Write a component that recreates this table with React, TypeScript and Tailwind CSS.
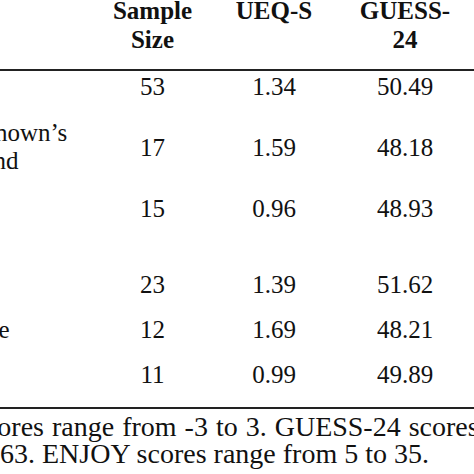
const rows = [
  { label: ["Total"], n: "53", ueq: "1.34", guess: "50.49", mt: "mt-[1px]" },
  { label: ["PlayerUnknown’s", "Battleground"], n: "17", ueq: "1.59", guess: "48.18", mt: "mt-[18px]" },
  { label: ["Tetris"], n: "15", ueq: "0.96", guess: "48.93", mt: "mt-[19px]" },
  { label: ["Casual"], n: "23", ueq: "1.39", guess: "51.62", mt: "mt-[47px]" },
  { label: ["Mini Puzzle"], n: "12", ueq: "1.69", guess: "48.21", mt: "mt-[16px]" },
  { label: ["Chess"], n: "11", ueq: "0.99", guess: "49.89", mt: "mt-[16px]" },
];

export default function App() {
  return (
    <div className="h-[474px] w-[474px] overflow-hidden bg-white text-[#111] [font-family:'Liberation_Serif',serif]">
      <div className="ml-[-112px] mt-[-4px] w-[620px] text-[25px] leading-[29px]">
        {/* Header */}
        <div className="grid grid-cols-[202px_125px_118px_144px] pb-[15px] text-center font-bold">
          <div />
          <div>
            Sample
            <br />
            Size
          </div>
          <div>UEQ-S</div>
          <div>
            GUESS-
            <br />
            24
          </div>
        </div>
        <div className="h-[2px] w-full bg-[#222]" />

        {/* Body */}
        {rows.map((r) => (
          <div
            key={r.n}
            className={`grid grid-cols-[202px_125px_118px_144px] items-center text-center ${r.mt}`}
          >
            <div className="whitespace-nowrap text-left leading-[28px]">
              {r.label.map((l) => (
                <div key={l}>{l}</div>
              ))}
            </div>
            <div>{r.n}</div>
            <div>{r.ueq}</div>
            <div>{r.guess}</div>
          </div>
        ))}
        <div className="mt-[18px] h-[2px] w-full bg-[#222]" />
      </div>

      {/* Note */}
      <div className="mt-[4px] whitespace-nowrap text-[28px] leading-[27px]">
        <div className="ml-[-26px] [word-spacing:1px]">scores range from -3 to 3. GUESS-24 scores range</div>
        <div className="ml-[-14px]">163. ENJOY scores range from 5 to 35.</div>
      </div>
    </div>
  );
}
